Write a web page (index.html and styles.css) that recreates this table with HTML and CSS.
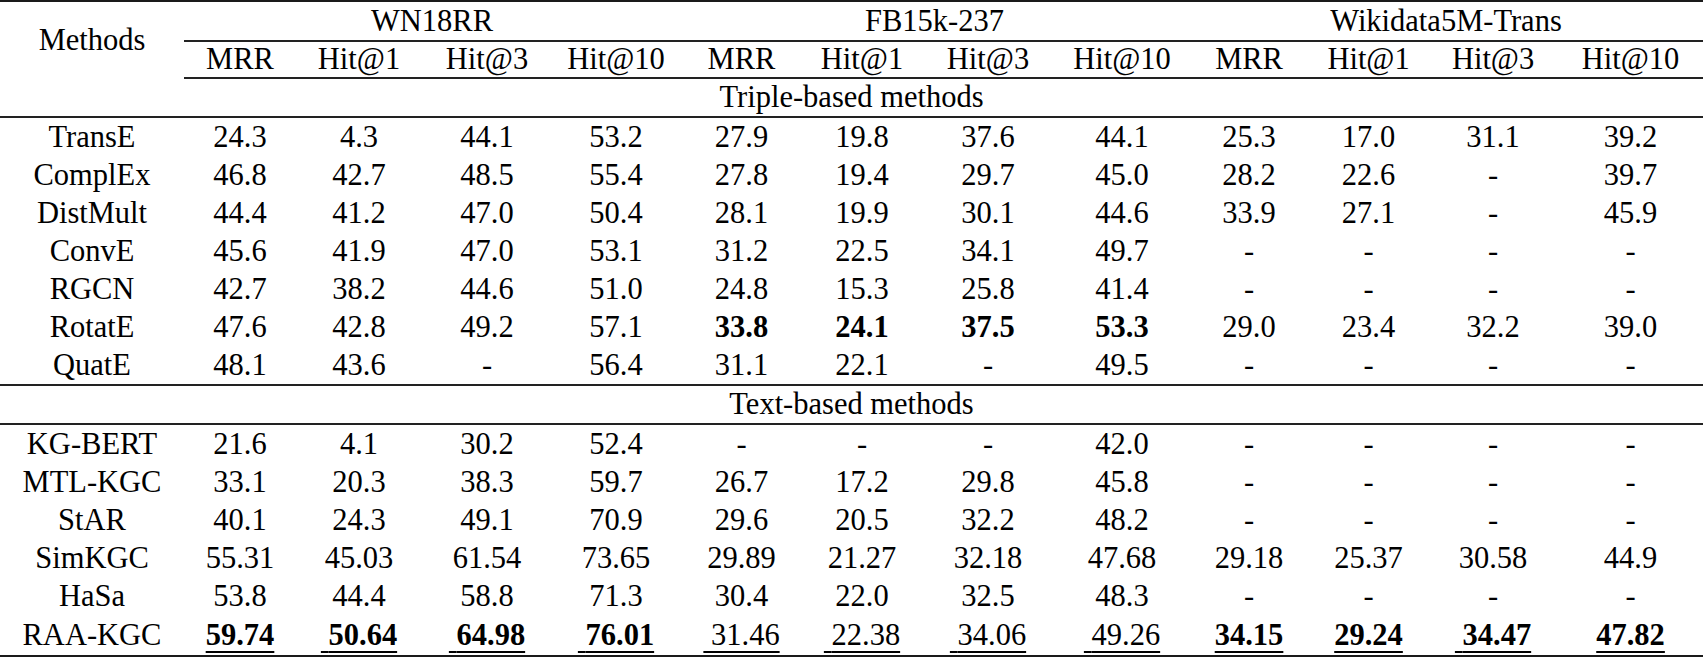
FILE: index.html
```html
<!DOCTYPE html>
<html>
<head>
<meta charset="utf-8">
<link rel="stylesheet" href="styles.css">
</head>
<body>
<table class="res">
  <colgroup>
    <col class="c-m"><col class="c2"><col class="c3"><col class="c4"><col class="c5"><col class="c6"><col class="c7"><col class="c8"><col class="c9"><col class="c10"><col class="c11"><col class="c12"><col class="c13">
  </colgroup>
  <thead>
    <tr class="top">
      <th rowspan="2" class="meth">Methods</th>
      <th colspan="4" class="grp">WN18RR</th>
      <th colspan="4" class="grp">FB15k-237</th>
      <th colspan="4" class="grp">Wikidata5M-Trans</th>
    </tr>
    <tr class="metrics">
      <th>MRR</th><th>Hit@1</th><th>Hit@3</th><th>Hit@10</th>
      <th>MRR</th><th>Hit@1</th><th>Hit@3</th><th>Hit@10</th>
      <th>MRR</th><th>Hit@1</th><th>Hit@3</th><th>Hit@10</th>
    </tr>
  </thead>
  <tbody>
    <tr class="sec"><td colspan="13">Triple-based methods</td></tr>
    <tr class="first"><td>TransE</td><td>24.3</td><td>4.3</td><td>44.1</td><td>53.2</td><td>27.9</td><td>19.8</td><td>37.6</td><td>44.1</td><td>25.3</td><td>17.0</td><td>31.1</td><td>39.2</td></tr>
    <tr><td>ComplEx</td><td>46.8</td><td>42.7</td><td>48.5</td><td>55.4</td><td>27.8</td><td>19.4</td><td>29.7</td><td>45.0</td><td>28.2</td><td>22.6</td><td>-</td><td>39.7</td></tr>
    <tr><td>DistMult</td><td>44.4</td><td>41.2</td><td>47.0</td><td>50.4</td><td>28.1</td><td>19.9</td><td>30.1</td><td>44.6</td><td>33.9</td><td>27.1</td><td>-</td><td>45.9</td></tr>
    <tr><td>ConvE</td><td>45.6</td><td>41.9</td><td>47.0</td><td>53.1</td><td>31.2</td><td>22.5</td><td>34.1</td><td>49.7</td><td>-</td><td>-</td><td>-</td><td>-</td></tr>
    <tr><td>RGCN</td><td>42.7</td><td>38.2</td><td>44.6</td><td>51.0</td><td>24.8</td><td>15.3</td><td>25.8</td><td>41.4</td><td>-</td><td>-</td><td>-</td><td>-</td></tr>
    <tr><td>RotatE</td><td>47.6</td><td>42.8</td><td>49.2</td><td>57.1</td><td><b>33.8</b></td><td><b>24.1</b></td><td><b>37.5</b></td><td><b>53.3</b></td><td>29.0</td><td>23.4</td><td>32.2</td><td>39.0</td></tr>
    <tr class="last"><td>QuatE</td><td>48.1</td><td>43.6</td><td>-</td><td>56.4</td><td>31.1</td><td>22.1</td><td>-</td><td>49.5</td><td>-</td><td>-</td><td>-</td><td>-</td></tr>
    <tr class="sec"><td colspan="13">Text-based methods</td></tr>
    <tr class="first"><td>KG-BERT</td><td>21.6</td><td>4.1</td><td>30.2</td><td>52.4</td><td>-</td><td>-</td><td>-</td><td>42.0</td><td>-</td><td>-</td><td>-</td><td>-</td></tr>
    <tr><td>MTL-KGC</td><td>33.1</td><td>20.3</td><td>38.3</td><td>59.7</td><td>26.7</td><td>17.2</td><td>29.8</td><td>45.8</td><td>-</td><td>-</td><td>-</td><td>-</td></tr>
    <tr><td>StAR</td><td>40.1</td><td>24.3</td><td>49.1</td><td>70.9</td><td>29.6</td><td>20.5</td><td>32.2</td><td>48.2</td><td>-</td><td>-</td><td>-</td><td>-</td></tr>
    <tr><td>SimKGC</td><td>55.31</td><td>45.03</td><td>61.54</td><td>73.65</td><td>29.89</td><td>21.27</td><td>32.18</td><td>47.68</td><td>29.18</td><td>25.37</td><td>30.58</td><td>44.9</td></tr>
    <tr><td>HaSa</td><td>53.8</td><td>44.4</td><td>58.8</td><td>71.3</td><td>30.4</td><td>22.0</td><td>32.5</td><td>48.3</td><td>-</td><td>-</td><td>-</td><td>-</td></tr>
    <tr class="end"><td>RAA-KGC</td><td><b class="u">59.74</b></td><td><b class="u sp">50.64</b></td><td><b class="u sp">64.98</b></td><td><b class="u sp">76.01</b></td><td><span class="u sp">31.46</span></td><td><span class="u sp">22.38</span></td><td><span class="u sp">34.06</span></td><td><span class="u sp">49.26</span></td><td><b class="u">34.15</b></td><td><b class="u">29.24</b></td><td><b class="u sp">34.47</b></td><td><b class="u">47.82</b></td></tr>
  </tbody>
</table>
</body>
</html>
```

FILE: styles.css
```css
html, body {
  margin: 0;
  padding: 0;
  background: #fff;
}

.res {
  border-collapse: collapse;
  table-layout: fixed;
  width: 1703px;
  font-family: "Liberation Serif", "Times New Roman", serif;
  font-size: 30.5px;
  color: #000;
  border-top: 2px solid #1a1a1a;
  border-bottom: 2px solid #1a1a1a;
}

.c-m { width: 184px; }
.c2 { width: 112px; }
.c3 { width: 126px; }
.c4 { width: 130px; }
.c5 { width: 128px; }
.c6 { width: 123px; }
.c7 { width: 118px; }
.c8 { width: 134px; }
.c9 { width: 134px; }
.c10 { width: 120px; }
.c11 { width: 119px; }
.c12 { width: 130px; }
.c13 { width: 145px; }

.res th, .res td {
  padding: 0;
  text-align: center;
  font-weight: normal;
  white-space: nowrap;
  line-height: 1;
}

.top th { height: 38px; }
.top .grp { border-bottom: 2px solid #222; }
.metrics th { height: 35px; border-bottom: 2px solid #222; }

.sec td { height: 37px; border-bottom: 2px solid #222; }
tbody tr td { height: 38px; }
tbody tr.sec td { height: 37px; }
tbody tr.last td { border-bottom: 2px solid #222; }
tbody tr.end td { height: 40px; }

.res b { font-weight: bold; }

.u {
  text-decoration: underline;
  text-decoration-thickness: 2px;
  text-underline-offset: 6px;
}

.u.sp::before {
  content: "\00a0";
}
```
